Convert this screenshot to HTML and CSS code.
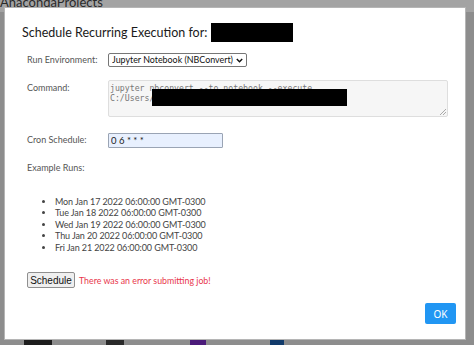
FILE: index.html
```html
<!DOCTYPE html>
<html lang="en">
<head>
  <meta charset="UTF-8">
  <meta name="viewport" content="width=device-width, initial-scale=1.0">
  <title>AnacondaProjects</title>
  <link rel="stylesheet" href="styles.css">
</head>
<body>
  <header class="app-bar">
    <span class="app-title">AnacondaProjects</span>
  </header>
  <div class="under">
    <span class="tile t1"></span>
    <span class="tile t2"></span>
    <span class="tile t3"></span>
    <span class="tile t4"></span>
  </div>

  <div class="modal">
    <h2 class="modal-title">Schedule Recurring Execution for: <span class="redact title-redact"></span></h2>

    <div class="row row-env">
      <label class="label">Run Environment:</label>
      <div class="select-wrap">
        <select class="select">
          <option>Jupyter Notebook (NBConvert)</option>
        </select>
        <svg class="chevron" width="7" height="5" viewBox="0 0 7 5"><path d="M0.8 1 L3.5 3.8 L6.2 1" fill="none" stroke="#111" stroke-width="1.4"/></svg>
      </div>
    </div>

    <div class="row row-command">
      <label class="label">Command:</label>
      <div class="textarea">
        <div>jupyter nbconvert --to notebook --execute</div>
        <div>C:/Users/</div>
        <span class="redact cmd-redact"></span>
        <span class="grip"></span>
      </div>
    </div>

    <div class="row row-cron">
      <label class="label">Cron Schedule:</label>
      <input class="cron" type="text" value="0 6 * * *">
    </div>

    <p class="label runs-label">Example Runs:</p>
    <ul class="runs">
      <li>Mon Jan 17 2022 06:00:00 GMT-0300</li>
      <li>Tue Jan 18 2022 06:00:00 GMT-0300</li>
      <li>Wed Jan 19 2022 06:00:00 GMT-0300</li>
      <li>Thu Jan 20 2022 06:00:00 GMT-0300</li>
      <li>Fri Jan 21 2022 06:00:00 GMT-0300</li>
    </ul>

    <div class="submit">
      <button class="btn-schedule">Schedule</button>
      <span class="error">There was an error submitting job!</span>
    </div>

    <div class="footer">
      <button class="btn-ok">OK</button>
    </div>
  </div>
</body>
</html>
```

FILE: styles.css
```css
* {margin: 0; padding: 0; box-sizing: border-box;}

body {
  width: 474px;
  height: 345px;
  overflow: hidden;
  background-color: #8d8d8d;
  font-family: Lato, "Noto Sans", sans-serif;
  position: relative;
}

.app-bar {
  height: 12px;
  background-color: #a3a3a3;
  overflow: hidden;
}
.app-title {
  display: block;
  margin-top: -6px;
  font-size: 13px;
  color: #2a2a2a;
}

/* bits of the page behind the dialog, peeking out at the bottom */
.under {
  position: absolute;
  left: 0;
  right: 0;
  bottom: 0;
  height: 6px;
}
.tile {
  position: absolute;
  bottom: 0;
  height: 5px;
}
.t1 {left: 24px; width: 28px; background: #1d1d1d;}
.t2 {left: 106px; width: 18px; background: #2a2a2a;}
.t3 {left: 190px; width: 16px; background: #4b1b7a;}
.t4 {left: 270px; width: 14px; background: #123b6b;}

.modal {
  position: absolute;
  left: 4px;
  top: 7px;
  width: 462px;
  height: 333px;
  background-color: #fff;
  border: 1px solid #b5b5b5;
  padding: 12px 17px 0 17px;
  display: flex;
  flex-direction: column;
}

.modal-title {
  font-weight: normal;
  font-size: 12.5px;
  color: #1a1a1a;
  display: flex;
  align-items: center;
  gap: 4px;
  height: 24px;
}
.redact {
  display: inline-block;
  background-color: #000;
}
.title-redact {
  width: 82px;
  height: 19px;
}

.row {
  display: flex;
  align-items: flex-start;
  padding-left: 5px;
}
.label {
  width: 81px;
  flex-shrink: 0;
  font-size: 9px;
  color: #555;
  line-height: 14px;
  white-space: nowrap;
}

.row-env {
  margin-top: 9px;
}
.select-wrap {
  position: relative;
  width: 139px;
  height: 14px;
}
.select {
  display: block;
  appearance: none;
  width: 100%;
  height: 100%;
  font-family: Lato, "Noto Sans", sans-serif;
  font-size: 8.9px;
  color: #111;
  border: 1px solid #767676;
  border-radius: 2px;
  background: #fff;
  padding: 0 3px;
  line-height: 12px;
}
.chevron {
  position: absolute;
  right: 4px;
  top: 5px;
  pointer-events: none;
}

.row-command {
  margin-top: 13px;
}
.row-command .label {
  margin-top: 1px;
}
.textarea {
  position: relative;
  width: 340px;
  height: 37px;
  background-color: #f6f6f6;
  border: 1px solid #dedede;
  border-radius: 2px;
  padding: 3px 1px;
  font-family: "DejaVu Sans Mono", monospace;
  font-size: 8.2px;
  line-height: 9.5px;
  color: #777;
}
.cmd-redact {
  position: absolute;
  left: 43px;
  top: 8px;
  width: 195px;
  height: 17px;
}
.grip {
  position: absolute;
  right: 1px;
  bottom: 1px;
  width: 6px;
  height: 6px;
  background: linear-gradient(135deg, transparent 45%, #aaa 45%, #aaa 55%, transparent 55%, transparent 70%, #aaa 70%, #aaa 80%, transparent 80%);
}

.row-cron {
  margin-top: 16px;
}
.cron {
  width: 115px;
  height: 15px;
  background-color: #e8f0fe;
  border: 1px solid #9aa4b4;
  border-radius: 1px;
  padding: 0 2px;
  font-family: Lato, "Noto Sans", sans-serif;
  font-size: 9.5px;
  color: #222;
}

.runs-label {
  margin-top: 13px;
  padding-left: 5px;
  width: auto;
}
.runs {
  margin-top: 21px;
  padding-left: 33px;
  font-size: 9px;
  letter-spacing: -0.1px;
  line-height: 11.4px;
  color: #444;
  list-style: disc;
}

.submit {
  margin-top: 19px;
  padding-left: 5px;
  display: flex;
  align-items: center;
  gap: 4px;
}
.btn-schedule {
  width: 48px;
  height: 16px;
  font-family: "Liberation Sans", Arial, sans-serif;
  font-size: 10px;
  color: #111;
  background-color: #efefef;
  border: 1px solid #8f8f8f;
  border-radius: 2px;
  padding: 0;
}
.error {
  font-size: 8.8px;
  color: #e8364c;
}

.footer {
  margin-top: auto;
  margin-bottom: 15px;
  display: flex;
  justify-content: flex-end;
}
.btn-ok {
  width: 31px;
  height: 21px;
  margin-right: -8px;
  background-color: #2196f3;
  color: #fff;
  border: none;
  border-radius: 2px;
  font-family: "Noto Sans", sans-serif;
  font-size: 10px;
}
```
